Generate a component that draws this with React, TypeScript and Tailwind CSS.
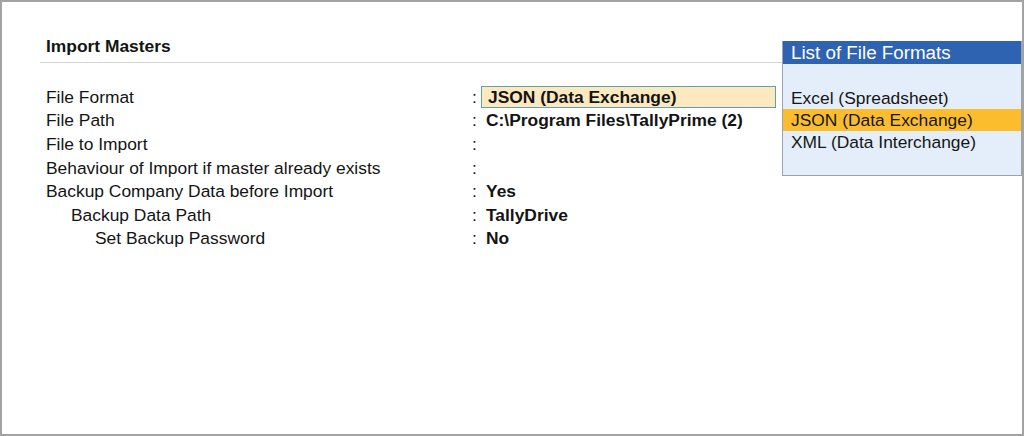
import React from "react";

const rows: { label: string; value?: string; indent: number; field?: boolean }[] = [
  { label: "File Format", value: "JSON (Data Exchange)", indent: 0, field: true },
  { label: "File Path", value: "C:\\Program Files\\TallyPrime (2)", indent: 0 },
  { label: "File to Import", indent: 0 },
  { label: "Behaviour of Import if master already exists", indent: 0 },
  { label: "Backup Company Data before Import", value: "Yes", indent: 0 },
  { label: "Backup Data Path", value: "TallyDrive", indent: 1 },
  { label: "Set Backup Password", value: "No", indent: 2 },
];

const indentCls = ["pl-0", "pl-[25px]", "pl-[49px]"];

export default function App() {
  return (
    <div
      className="relative w-[1024px] h-[436px] bg-white border-2 border-[#a3a3a3] overflow-hidden text-[#141414]"
      style={{ fontFamily: '"Liberation Sans", Arial, sans-serif' }}
    >
      <div className="pl-[38px] pt-[34px]">
        <div className="pl-[6px] h-[20px] text-[17.4px] font-bold leading-[20px]">Import Masters</div>
        <div className="mt-[6px] h-px bg-[#d4d4d4]" />
        <div className="mt-[22px] pl-[6px] flex flex-col">
          {rows.map((r, i) => (
            <div key={i} className="flex items-center h-[23.6px] text-[17.4px] leading-[20px]">
              <div className={`w-[426px] shrink-0 ${indentCls[r.indent]}`}>{r.label}</div>
              <div className="w-[9px] shrink-0">:</div>
              {r.field ? (
                <div className="w-[295px] h-[22px] pl-[6px] flex items-center bg-[#fde9c0] border border-[#5fa3a6] font-bold">
                  {r.value}
                </div>
              ) : (
                <div className="pl-[5px] font-bold">{r.value}</div>
              )}
            </div>
          ))}
        </div>
      </div>

      <div className="absolute left-[780px] top-[39px] w-[240px] h-[135px] bg-[#e4eefa] border border-[#9aa3ad] border-t-0">
        <div className="h-[23px] bg-[#2d63b1] text-white text-[18.8px] leading-[23px] pl-[8px]">
          List of File Formats
        </div>
        <div className="pt-[23px] text-[17.4px] leading-[22px] text-[#161616]">
          <div className="pl-[8px] h-[22px]">Excel (Spreadsheet)</div>
          <div className="pl-[8px] h-[22px] bg-[#fbbd2e]">JSON (Data Exchange)</div>
          <div className="pl-[8px] h-[22px]">XML (Data Interchange)</div>
        </div>
      </div>
    </div>
  );
}
